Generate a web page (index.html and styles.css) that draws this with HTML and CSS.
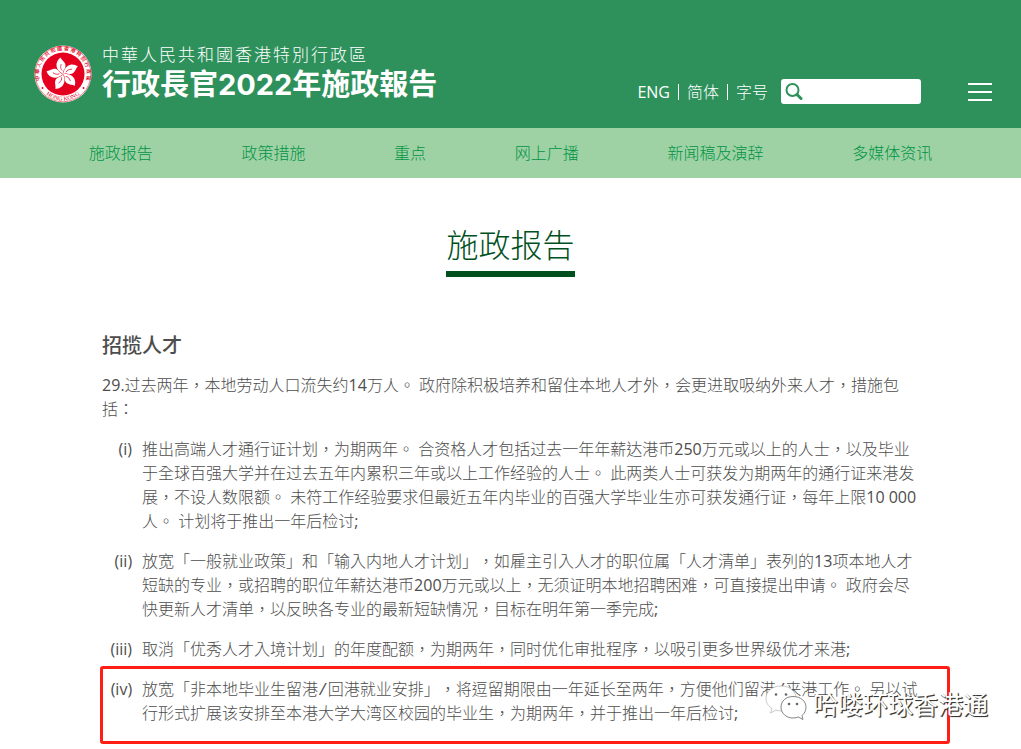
FILE: index.html
```html
<!DOCTYPE html>
<html lang="zh-Hant">
<head>
    <meta charset="UTF-8">
    <meta name="viewport" content="width=device-width, initial-scale=1.0">
    <title>行政長官2022年施政報告</title>
    <link rel="stylesheet" href="styles.css">
</head>
<body>
    <header class="site-header">
        <a class="brand" href="#">
            <svg class="emblem" viewBox="-29 -29 58 58" aria-hidden="true">
                <defs>
                    <path id="ring-top" d="M-18.500 15.500A24 24 0 1 1 18.500 15.500"/>
                    <path id="ring-bottom" d="M-20 17.500A26.600 26.600 0 0 0 20 17.500"/>
                    <path id="petal" d="M0 0C-4 -2.500 -7 -5.500 -6.500 -10C-6 -13 -4.500 -15 -2.500 -16.500C-1.500 -13.500 3 -12 2.500 -7.500C2 -4.500 -0.500 -3.500 0 0Z"/>
                    <path id="vein" d="M-0.800 -3.500C-2.400 -5 -2.800 -7 -1.800 -10"/>
                </defs>
                <circle r="28.500" fill="#fff"/>
                <circle r="27.800" fill="none" stroke="#e60020" stroke-width="0.5"/>
                <circle r="21.500" fill="#e60020"/>
                <g fill="#fff">
                    <use href="#petal"/>
                    <use href="#petal" transform="rotate(72)"/>
                    <use href="#petal" transform="rotate(144)"/>
                    <use href="#petal" transform="rotate(216)"/>
                    <use href="#petal" transform="rotate(288)"/>
                </g>
                <g fill="none" stroke="#e60020" stroke-width="0.7">
                    <use href="#vein"/>
                    <use href="#vein" transform="rotate(72)"/>
                    <use href="#vein" transform="rotate(144)"/>
                    <use href="#vein" transform="rotate(216)"/>
                    <use href="#vein" transform="rotate(288)"/>
                </g>
                <circle cx="-20.500" cy="14" r="1" fill="#e60020"/>
                <circle cx="20.500" cy="14" r="1" fill="#e60020"/>
                <text class="ring-text"><textPath href="#ring-top" startOffset="50%">中 華 人 民 共 和 國 香 港 特 別 行 政 區</textPath></text>
                <text class="ring-text ring-latin"><textPath href="#ring-bottom" startOffset="50%">HONG KONG</textPath></text>
            </svg>
            <span class="brand-text">
                <span class="brand-region">中華人民共和國香港特別行政區</span>
                <span class="brand-title">行政長官2022年施政報告</span>
            </span>
        </a>
        <div class="tools">
            <ul class="tool-links">
                <li><a href="#">ENG</a></li>
                <li><a href="#">简体</a></li>
                <li><a href="#">字号</a></li>
            </ul>
            <form class="search">
                <svg class="search-icon" viewBox="0 0 18 18" aria-hidden="true">
                    <circle cx="7.500" cy="7" r="6" fill="none" stroke="#2e915b" stroke-width="2"/>
                    <path d="M12 11.500L16 15.500" stroke="#2e915b" stroke-width="3" stroke-linecap="round"/>
                </svg>
                <input type="search" aria-label="搜寻">
            </form>
            <button class="menu-button" type="button" aria-label="目录">
                <span></span>
                <span></span>
                <span></span>
            </button>
        </div>
    </header>

    <nav class="main-nav">
        <a href="#">施政报告</a>
        <a href="#">政策措施</a>
        <a href="#">重点</a>
        <a href="#">网上广播</a>
        <a href="#">新闻稿及演辞</a>
        <a href="#">多媒体资讯</a>
    </nav>

    <main class="content">
        <h1>施政报告</h1>
        <h2>招揽人才</h2>
        <p>29.过去两年，本地劳动人口流失约14万人。 政府除积极培养和留住本地人才外，会更进取吸纳外来人才，措施包括：</p>
        <ol class="measures">
            <li>
                <span class="num">(i)</span>
                <span>推出高端人才通行证计划，为期两年。 合资格人才包括过去一年年薪达港币250万元或以上的人士，以及毕业于全球百强大学并在过去五年内累积三年或以上工作经验的人士。 此两类人士可获发为期两年的通行证来港发展，不设人数限额。 未符工作经验要求但最近五年内毕业的百强大学毕业生亦可获发通行证，每年上限10 000人。 计划将于推出一年后检讨;</span>
            </li>
            <li>
                <span class="num">(ii)</span>
                <span>放宽「一般就业政策」和「输入内地人才计划」，如雇主引入人才的职位属「人才清单」表列的13项本地人才短缺的专业，或招聘的职位年薪达港币200万元或以上，无须证明本地招聘困难，可直接提出申请。 政府会尽快更新人才清单，以反映各专业的最新短缺情况，目标在明年第一季完成;</span>
            </li>
            <li>
                <span class="num">(iii)</span>
                <span>取消「优秀人才入境计划」的年度配额，为期两年，同时优化审批程序，以吸引更多世界级优才来港;</span>
            </li>
            <li class="marked">
                <span class="num">(iv)</span>
                <span>放宽「非本地毕业生留港<span class="slash">/</span>回港就业安排」，将逗留期限由一年延长至两年，方便他们留港<span class="slash">/</span>来港工作。 另以试行形式扩展该安排至本港大学大湾区校园的毕业生，为期两年，并于推出一年后检讨;</span>
                <div class="watermark">
                    <svg class="wechat" viewBox="0 0 42 36" aria-hidden="true">
                        <g fill="#fff" stroke="#666" stroke-width="0.8">
                            <path d="M16 1C7 1 1 6.500 1 13.500C1 18 3.500 21.500 7 23.500L5.500 28L11 25C13 25.600 15 26 17 26C25 26 31 20 31 13.500C31 6.500 25 1 16 1Z" stroke="#bbb"/>
                            <path d="M28 11.500C20.500 11.500 16 16.500 16 22C16 28 21 33 28 33C30 33 32 32.600 33.500 32L38 34.500L37 30.500C39.500 28.500 41 25.500 41 22C41 16.500 36 11.500 28 11.500Z"/>
                        </g>
                        <g fill="#666">
                            <circle cx="11" cy="9.500" r="1.300"/>
                            <circle cx="21" cy="9.500" r="1.300"/>
                            <circle cx="24" cy="19" r="1.300"/>
                            <circle cx="32" cy="19" r="1.300"/>
                        </g>
                    </svg>
                    <span lang="zh-Hans">哈喽环球香港通</span>
                </div>
            </li>
        </ol>
    </main>
</body>
</html>
```
FILE: styles.css
```css
* {
    box-sizing: border-box;
}
body {
    margin: 0;
    background: #fff;
    color: #4d4d4d;
    font-family: "Open Sans", "Noto Sans CJK TC Light", "Noto Sans CJK TC", sans-serif;
    font-size: 16px;
    line-height: 24px;
    text-spacing-trim: space-all;
}
a {
    color: inherit;
    text-decoration: none;
}
ul, ol {
    list-style: none;
    margin: 0;
    padding: 0;
}

/* Header */
.site-header {
    display: flex;
    justify-content: space-between;
    align-items: flex-end;
    height: 128px;
    padding: 0 29px 24px 34px;
    background: #2e915b;
    color: #fff;
}
.brand {
    display: flex;
    align-items: flex-start;
    gap: 10px;
}
.emblem {
    width: 58px;
    height: 60px;
}
.brand-text {
    display: flex;
    flex-direction: column;
}
.ring-text {
    fill: #e60020;
    font-size: 5px;
    font-weight: 700;
    text-anchor: middle;
}
.ring-latin {
    font-family: "Liberation Serif", serif;
    font-size: 6px;
    font-weight: 400;
}
.brand-region {
    font-size: 17px;
    letter-spacing: 2px;
    line-height: 22px;
}
.brand-title {
    font-family: Inter, "Noto Sans CJK TC", sans-serif;
    font-size: 29px;
    font-weight: 700;
    line-height: 38px;
}
.tools {
    display: flex;
    align-items: center;
}
.tool-links {
    display: flex;
}
.tool-links li {
    display: flex;
    align-items: center;
}
.tool-links li + li::before {
    content: "";
    width: 1px;
    height: 16px;
    margin: 0 8px;
    background: #fff;
}
.search {
    display: flex;
    align-items: center;
    width: 140px;
    height: 25px;
    margin: 0 47px 0 13px;
    padding-left: 4px;
    border-radius: 3px;
    background: #fff;
}
.search-icon {
    flex: none;
    width: 18px;
    height: 18px;
}
.search input {
    flex: 1;
    min-width: 0;
    border: 0;
    outline: 0;
    background: none;
    font: inherit;
}
.menu-button {
    display: flex;
    flex-direction: column;
    gap: 6px;
    width: 24px;
    padding: 0;
    border: 0;
    background: none;
}
.menu-button span {
    height: 2px;
    background: #fff;
}

/* Navigation */
.main-nav {
    display: flex;
    justify-content: space-evenly;
    align-items: center;
    height: 50px;
    background: #9ed2a4;
    color: #009245;
}

/* Article */
.content {
    padding: 44px 10% 24px;
}
h1 {
    width: fit-content;
    margin: 0 auto 54px;
    padding-bottom: 4px;
    border-bottom: 6px solid #00501e;
    color: #00501e;
    font-size: 32px;
    font-weight: 400;
    line-height: 45px;
}
h2 {
    margin: 0 0 12px;
    font-family: "Noto Sans", "Noto Sans CJK TC", sans-serif;
    font-size: 20px;
    font-weight: 500;
    line-height: 30px;
}
p {
    margin: 0 0 16px;
}
.measures {
    display: flex;
    flex-direction: column;
    gap: 16px;
}
.measures li {
    display: grid;
    grid-template-columns: 30px 1fr;
    column-gap: 10px;
}
.num {
    text-align: right;
}
.slash {
    font-family: "Liberation Mono", monospace;
    line-height: 16px;
}

/* Red frame round the last measure */
.marked {
    position: relative;
}
.marked::before {
    content: "";
    position: absolute;
    inset: -11px -31px -19px -2px;
    border: 3px solid #ff1e14;
    border-radius: 3px;
}
.watermark {
    position: absolute;
    right: -69px;
    bottom: 4px;
    display: flex;
    align-items: center;
    gap: 6px;
    color: #fff;
    font-family: "Noto Sans CJK SC", sans-serif;
    font-size: 25px;
    line-height: 36px;
    text-shadow: 1px 1px 1px #333, 1px 1px 0 #555;
}
.wechat {
    width: 42px;
    height: 36px;
}
```
